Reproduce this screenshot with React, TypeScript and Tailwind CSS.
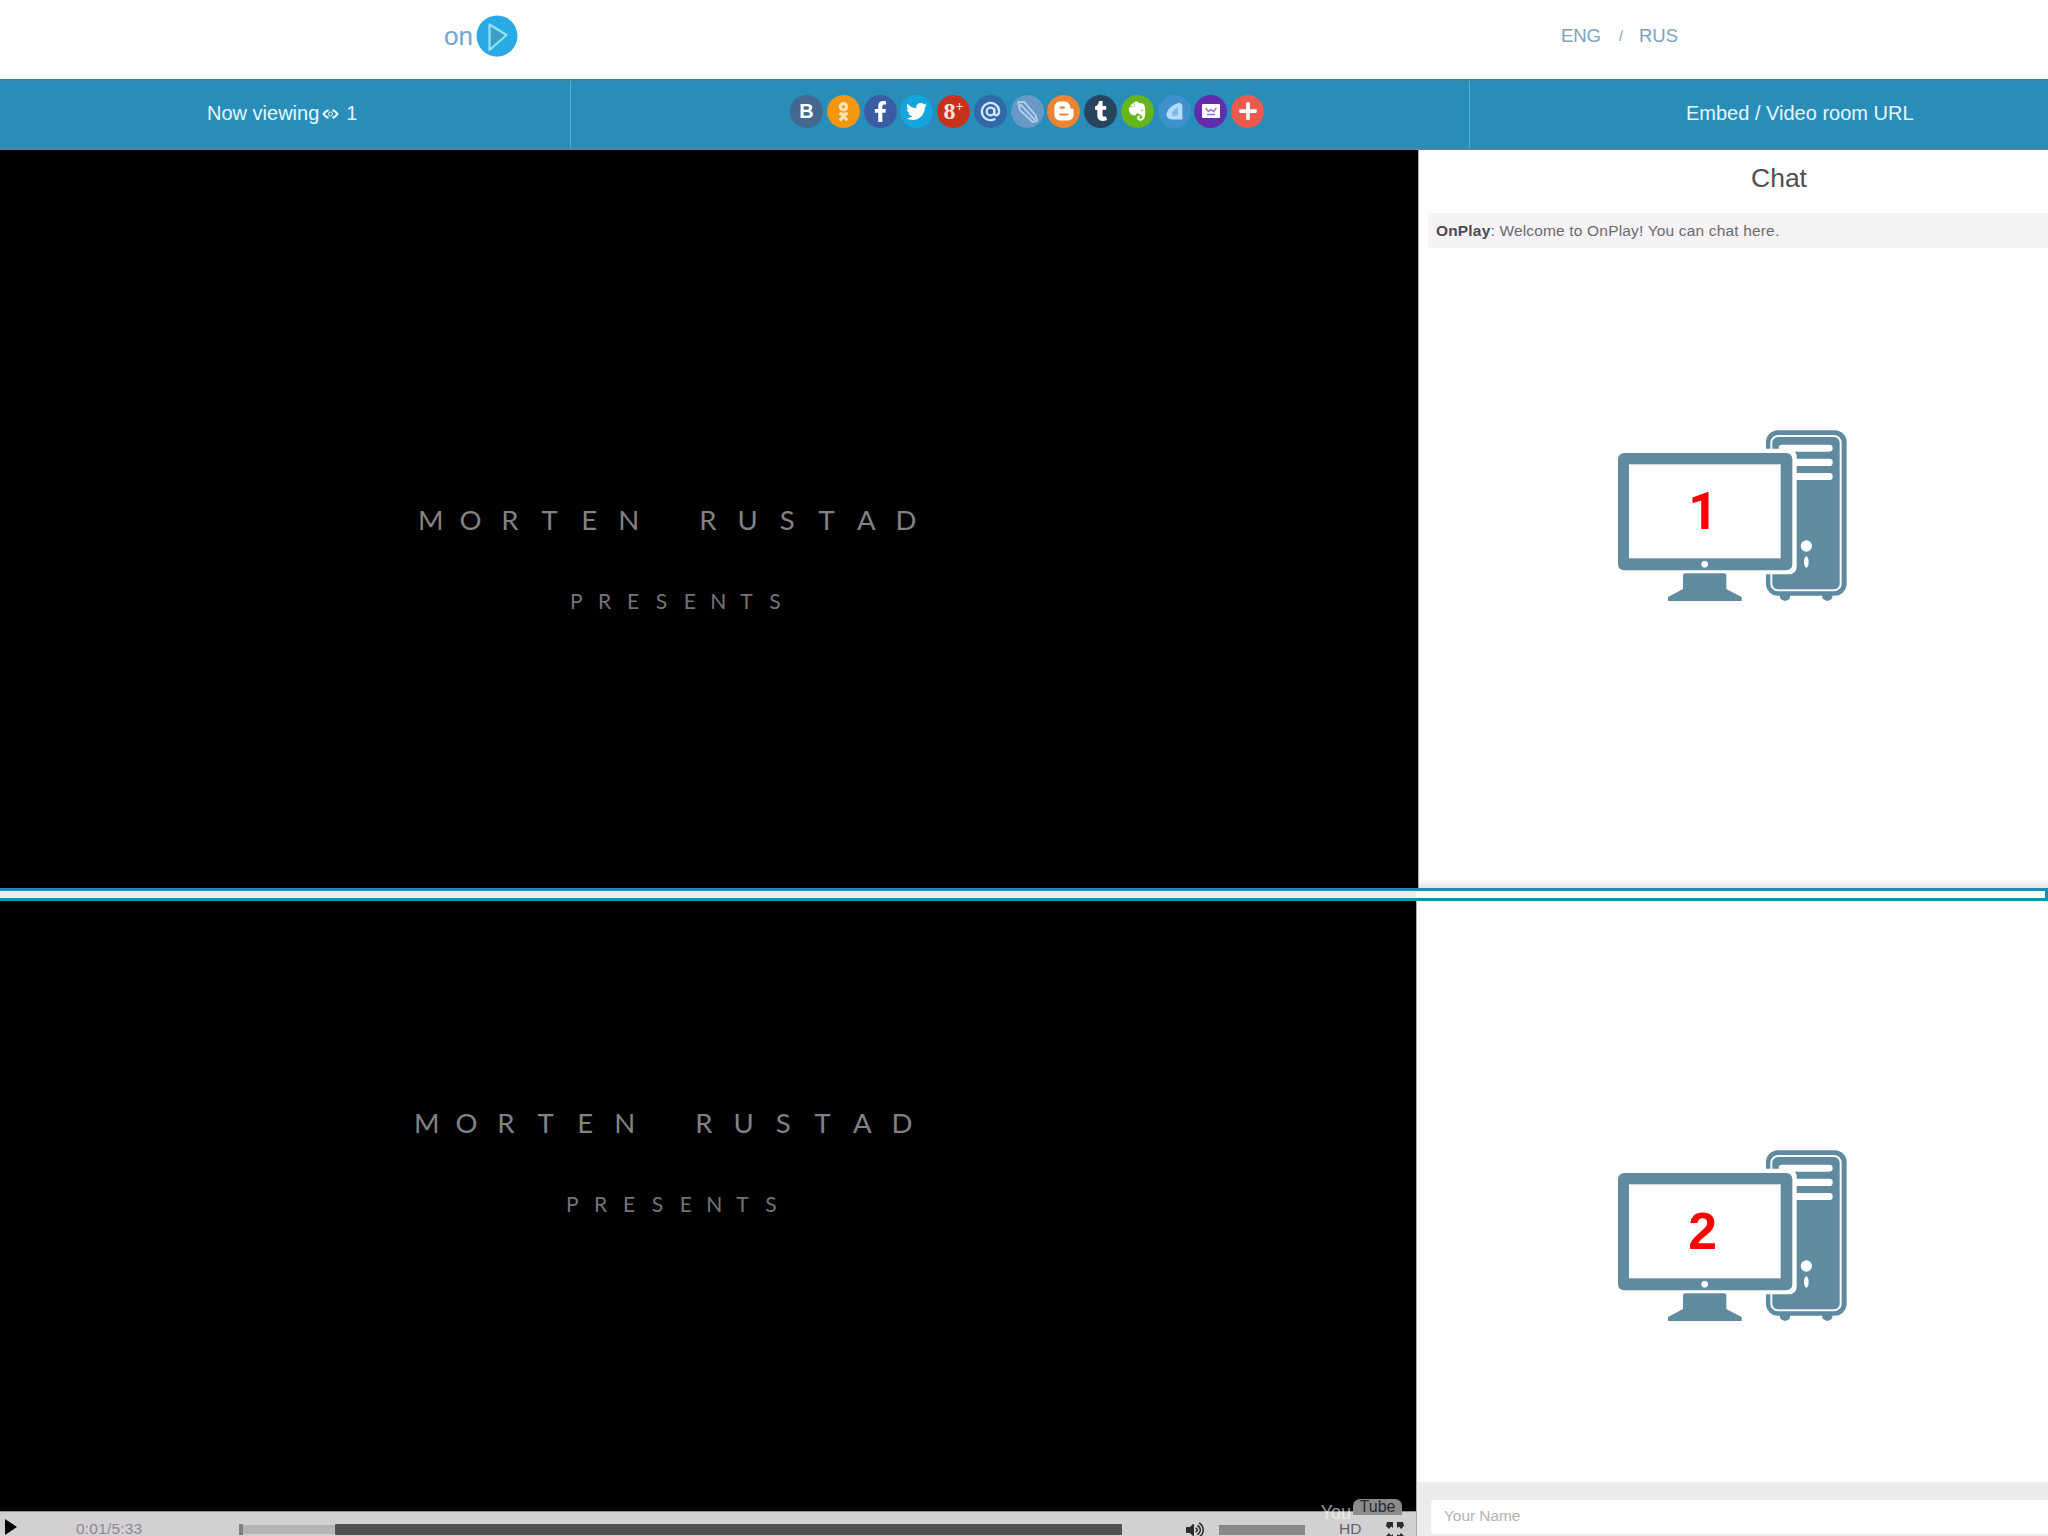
import React from "react";
import { FaFacebookF, FaTwitter, FaTumblr, FaEvernote, FaBloggerB, FaPlus, FaVolumeUp } from "react-icons/fa";

function Computer({ label, font, x }: { label: string; font: string; x: number }) {
  return (
    <svg className="block h-[210px] w-[270px]" viewBox="0 0 810 630">
      <g fill="#5f8a9f">
        <rect x="498" y="58" width="242" height="496" rx="36" />
        <path d="M540 550h30v12q-14 16-30 0zM667 550h30v12q-14 16-30 0z" />
      </g>
      <rect x="514" y="75" width="208" height="463" rx="20" fill="none" stroke="#f4f9fb" strokeWidth="6" />
      <g fill="#fefefe">
        <rect x="536" y="101" width="162" height="21" rx="10" />
        <rect x="560" y="143" width="138" height="22" rx="10" />
        <rect x="560" y="186" width="138" height="21" rx="10" />
        <circle cx="619" cy="405" r="17" />
        <ellipse cx="619" cy="453" rx="7" ry="17" />
        <path d="M44 113H564q26 0 26 26V464q0 26-26 26H44z" />
      </g>
      <g fill="#5f8a9f">
        <rect x="54" y="126" width="523" height="352" rx="18" />
        <path d="M256 487H372q7 0 7 7v40l46 24v12H204V558l45-24v-40q0-7 7-7z" />
      </g>
      <rect x="87" y="160" width="455" height="282" fill="#fefefe" />
      <circle cx="314" cy="460" r="10" fill="#fefefe" />
      <text x={x} y="353" textAnchor="middle" fontFamily={font} fontWeight="700" fontSize="155" fill="#ff0000">
        {label}
      </text>
    </svg>
  );
}

function Titles() {
  return (
    <div className="font-['Lato',sans-serif] whitespace-pre">
      <p className="flex h-[34px] text-[27.500px] leading-[34px] text-[#828282]">
        {"MORTEN RUSTAD".split("").map((c, i) => (
          <span key={i} className="w-[39.6px] text-center">{c}</span>
        ))}
      </p>
      <p className="mt-[49px] ml-[151px] flex h-[30px] text-[21px] leading-[30px] text-[#747474]">
        {"PRESENTS".split("").map((c, i) => (
          <span key={i} className="w-[28.4px] text-center">{c}</span>
        ))}
      </p>
    </div>
  );
}

const glyph = "h-[21px] w-[21px]";
const shares: { bg: string; icon: React.ReactNode }[] = [
  { bg: "bg-[#42688f]", icon: <b className="text-[20px] leading-none">B</b> },
  {
    bg: "bg-[#f5960f]",
    icon: (
      <svg viewBox="0 0 20 20" className={glyph} fill="none" stroke="#ffe3b4" strokeWidth="3">
        <circle cx="10" cy="5.5" r="3" />
        <path d="M6 11.5q4 2.5 8 0M10 13v2M6.5 18.5l3.5-4 3.5 4" />
      </svg>
    ),
  },
  { bg: "bg-[#3b5ba5]", icon: <FaFacebookF className="h-[21px] w-[21px]" /> },
  { bg: "bg-[#12a5df]", icon: <FaTwitter className="h-[21px] w-[21px]" /> },
  {
    bg: "bg-[#c8321a]",
    icon: (
      <span className="flex font-['Liberation_Serif',serif] leading-none text-[#ffe4dc]">
        <b className="text-[24px] leading-[20px]">8</b>
        <b className="text-[14px] leading-[12px]">+</b>
      </span>
    ),
  },
  {
    bg: "bg-[#3069a9]",
    icon: (
      <svg viewBox="0 0 24 24" className="h-[23px] w-[23px]" fill="none" stroke="#d5e6f8" strokeWidth="2.4">
        <circle cx="12" cy="12" r="4" />
        <path d="M16 8v5.500q0 2.500 2.300 2.500 2.700-1 2.700-4A9 9 0 1 0 17 19.500" />
      </svg>
    ),
  },
  {
    bg: "bg-[#6798c6]",
    icon: (
      <svg viewBox="0 0 24 24" className="h-[25px] w-[25px]" fill="none" stroke="#b2d0ea" strokeWidth="1.800">
        <path d="M3 3l2 8 12 11 4-1-1-5L9 3zM5 5l14 15" />
      </svg>
    ),
  },
  { bg: "bg-[#ed8434]", icon: <FaBloggerB className="h-[22px] w-[22px]" /> },
  { bg: "bg-[#29445f]", icon: <FaTumblr className="h-[20px] w-[20px]" /> },
  { bg: "bg-[#66b51b]", icon: <FaEvernote className="h-[22px] w-[22px]" /> },
  {
    bg: "bg-[#3f91cc]",
    icon: (
      <svg viewBox="0 0 24 24" className="h-[21px] w-[21px]" fill="#b4dcff">
        <path d="M17 2q4 1 4 4v15H9q-7-1-6-7Q5 6 17 2z" />
        <path d="M16 7v9q-5 3-7 0 0-6 7-9z" fill="#83b9ea" />
      </svg>
    ),
  },
  {
    bg: "bg-[#652bad]",
    icon: (
      <svg viewBox="0 0 18 14" className="h-[14px] w-[18px]">
        <rect width="18" height="14" rx="1" fill="#fff" />
        <path d="M3.500 4l3 3.500L9 5.500l2.500 2L14.500 4M5 10.500h8" fill="none" stroke="#a06fcb" strokeWidth="1.500" />
      </svg>
    ),
  },
  { bg: "bg-[#ea5a4f]", icon: <FaPlus className="h-[20px] w-[20px]" /> },
];

export default function App() {
  return (
    <div className="flex h-[1536px] w-[2048px] flex-col overflow-hidden bg-[#fefefe] font-['Liberation_Sans',Arial,sans-serif]">
      <header className="flex h-[79px] shrink-0 items-start">
        <div className="ml-[444px] flex items-center pt-[14px]">
          <span className="text-[26px] leading-[44px] text-[#6fa6d0]">on</span>
          <svg className="ml-[2px] h-[44px] w-[44px]" viewBox="0 0 44 44">
            <circle cx="22" cy="22" r="20.500" fill="#29a9e5" />
            <path d="M14.500 10.500v25.500L31.500 21z" fill="#3f9cc4" stroke="#8ce6fb" strokeWidth="2.200" strokeLinejoin="round" />
          </svg>
        </div>
        <nav className="ml-[1042px] flex pt-[24px] text-[18.500px] leading-6 text-[#7da3b8]">
          <span className="w-[58px]">ENG</span>
          <span className="w-[20px] text-[14px]">/</span>
          <span>RUS</span>
        </nav>
      </header>

      <div className="flex h-[71px] shrink-0 border-t-2 border-b-2 border-t-[#3f86a6] border-b-[#4c87a3] bg-[#288db8] text-[20px] leading-[23px] text-[#e6f7ff]">
        <div className="flex w-[571px] border-r border-[#5eaccd] pt-[21px] pl-[207px]">
          <span>Now viewing</span>
          <svg className="mt-[6px] ml-[3px] h-[12px] w-[17px]" viewBox="0 0 17 12" fill="none" stroke="#e6f7ff" strokeWidth="2.200">
            <path d="M6.500 2Q3 3.500 1.500 6 3 8.500 6.500 10M10.500 2Q14 3.500 15.500 6 14 8.500 10.500 10" />
            <circle cx="8.500" cy="6" r="2" strokeWidth="1" />
          </svg>
          <span className="ml-[7px]">1</span>
        </div>
        <div className="flex w-[899px] items-start gap-[3.780px] border-r border-[#5eaccd] pt-[13.500px] pl-[219px] text-white">
          {shares.map((s, i) => (
            <span key={i} className={"flex h-[33px] w-[33px] shrink-0 items-center justify-center rounded-full " + s.bg}>
              {s.icon}
            </span>
          ))}
        </div>
        <div className="pt-[21px] pl-[216px] whitespace-nowrap">Embed / Video room URL</div>
      </div>

      <section className="flex h-[738px] shrink-0">
        <div className="w-[1418px] shrink-0 bg-[#010003] pt-[353px] pl-[411px]">
          <Titles />
        </div>
        <div className="flex grow flex-col border-l border-[#aaaaaa]">
          <h2 className="h-[63px] pt-[12px] pl-[332px] text-[26.500px] leading-8 text-[#505050]">Chat</h2>
          <p className="ml-[9px] h-[35px] bg-[#f5f3f6] pl-[8px] text-[15.500px] leading-[36px] tracking-[0.170px] whitespace-nowrap text-[#6b6a6c]">
            <b className="text-[#4c4b4d]">OnPlay</b>: Welcome to OnPlay! You can chat here.
          </p>
          <div className="mt-[162.500px] ml-[181px]">
            <Computer label="1" font="Roboto, sans-serif" x={309} />
          </div>
          <div className="mt-auto h-[9px] bg-gradient-to-b from-[#fefefe] to-[#e6e6e8]" />
        </div>
      </section>

      <div className="flex h-[13px] shrink-0 border-y-[3px] border-r-[3px] border-[#158fb8] bg-[#fdfdfe]">
        <div className="w-[1416px] bg-[#f1eaf1]" />
      </div>

      <section className="flex h-[635px] shrink-0">
        <div className="relative flex w-[1416px] shrink-0 flex-col bg-[#010003]">
          <div className="h-[610px] pt-[205px] pl-[407px]">
            <Titles />
          </div>
          <div className="flex h-[25px] items-start border-t border-[#908f91] bg-[#d2d0d3]">
            <svg className="mt-[7px] ml-[5px] h-[16px] w-[12px]" viewBox="0 0 12 16">
              <path d="M0 0l12 8L0 16z" fill="#050505" />
            </svg>
            <span className="mt-[9px] ml-[59px] w-[163px] text-[15.500px] leading-[15px] tracking-[0.200px] text-[#8c8a8d]">0:01/5:33</span>
            <span className="mt-[12px] h-[11px] w-[4px] bg-[#807e81]" />
            <span className="mt-[13px] h-[9px] w-[92px] bg-[#b6b4b7]" />
            <span className="mt-[12px] h-[11px] w-[787px] rounded-[1px] bg-[#525053]" />
            <FaVolumeUp className="mt-[9px] ml-[64px] h-[18px] w-[18px] text-[#2b2b2c]" />
            <span className="mt-[13px] ml-[15px] h-[10px] w-[86px] bg-[#898789]" />
            <span className="mt-[9px] ml-[34px] w-[47px] text-[15.500px] leading-[15px] text-[#626063]">HD</span>
            <svg className="mt-[10px] h-[18px] w-[18px]" viewBox="0 0 18 18" fill="#2b2b2c">
              <path d="M1 0h6v6L5 4.500 3 7 0 4zM17 0h-6v6l2-1.500L15 7l3-3zM1 18h6v-6l-2 1.500L3 11l-3 3zM17 18h-6v-6l2 1.500 2-2.500 3 3z" />
            </svg>
          </div>
          <div className="absolute top-[598px] left-[1319px] flex text-[20px] leading-[26px] text-white/60">
            <span className="w-[34px] scale-x-90">You</span>
            <span className="h-[16px] w-[49px] rounded-t-[7px] bg-[#8d8b8e] text-center text-[16px] leading-[16px] text-[#2a292b]">Tube</span>
          </div>
        </div>
        <div className="flex grow flex-col border-l border-[#aaaaaa]">
          <div className="mt-[229.500px] ml-[183px]">
            <Computer label="2" font="Liberation Sans, sans-serif" x={308} />
          </div>
          <div className="mt-auto h-[54px] bg-[#edebee] pt-[18px] pl-[14px]">
            <div className="h-[34px] rounded-l-[4px] bg-[#fefefe] pl-[13px] text-[15.400px] leading-[31px] text-[#b5b3b6]">Your Name</div>
          </div>
        </div>
      </section>
    </div>
  );
}
